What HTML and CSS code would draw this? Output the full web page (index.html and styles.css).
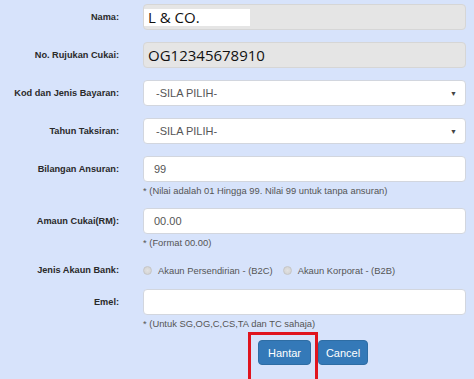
FILE: index.html
```html
<!DOCTYPE html>
<html lang="ms">
<head>
<meta charset="utf-8">
<title>Borang</title>
<link rel="stylesheet" href="styles.css">
</head>
<body>
<form class="form">
  <div class="row">
    <label class="lbl">Nama:</label>
    <div class="field field-disabled field-name"><span class="name-val">L &amp; CO.</span></div>
  </div>
  <div class="row">
    <label class="lbl">No. Rujukan Cukai:</label>
    <div class="field field-disabled field-ref">OG12345678910</div>
  </div>
  <div class="row">
    <label class="lbl">Kod dan Jenis Bayaran:</label>
    <div class="field field-select"><span>-SILA PILIH-</span><span class="arrow">&#9660;</span></div>
  </div>
  <div class="row">
    <label class="lbl">Tahun Taksiran:</label>
    <div class="field field-select"><span>-SILA PILIH-</span><span class="arrow">&#9660;</span></div>
  </div>
  <div class="row row-hint">
    <label class="lbl">Bilangan Ansuran:</label>
    <div class="col">
      <div class="field field-text">99</div>
      <div class="hint">* (Nilai adalah 01 Hingga 99. Nilai 99 untuk tanpa ansuran)</div>
    </div>
  </div>
  <div class="row row-hint">
    <label class="lbl">Amaun Cukai(RM):</label>
    <div class="col">
      <div class="field field-text">00.00</div>
      <div class="hint">* (Format 00.00)</div>
    </div>
  </div>
  <div class="row row-radio">
    <label class="lbl lbl-radio">Jenis Akaun Bank:</label>
    <div class="radios">
      <span class="radio"></span><span class="rlabel">Akaun Persendirian - (B2C)</span>
      <span class="radio radio2"></span><span class="rlabel">Akaun Korporat - (B2B)</span>
    </div>
  </div>
  <div class="row row-hint row-emel">
    <label class="lbl">Emel:</label>
    <div class="col">
      <div class="field field-text"></div>
      <div class="hint">* (Untuk SG,OG,C,CS,TA dan TC sahaja)</div>
    </div>
  </div>
  <div class="row row-buttons">
    <span></span>
    <div class="buttons">
      <span class="highlight"><button type="button" class="btn">Hantar</button></span>
      <button type="button" class="btn btn-cancel">Cancel</button>
    </div>
  </div>
</form>
</body>
</html>
```

FILE: styles.css
```css
html, body {
  margin: 0;
  padding: 0;
  background: #d7e3fb;
  overflow: hidden;
}
body {
  font-family: "Liberation Sans", Arial, sans-serif;
  width: 474px;
  height: 379px;
}
.form {
  padding-top: 4px;
}
.row {
  display: grid;
  grid-template-columns: 119px 323px;
  column-gap: 24px;
  align-items: start;
  margin-bottom: 12px;
}
.row-buttons {
  margin-bottom: 0;
}
.lbl {
  text-align: right;
  font-weight: bold;
  font-size: 9.2px;
  color: #2a2a2a;
  line-height: 26px;
}
.field {
  box-sizing: border-box;
  height: 26px;
  border: 1px solid #d2d6de;
  border-radius: 4px;
  background: #fff;
  display: flex;
  align-items: center;
}
.field-disabled {
  background: #e5e5e5;
  border-color: #d6d6d6;
  font-family: "Open Sans", "Noto Sans", sans-serif;
  font-size: 15px;
  color: #111;
}
.name-val {
  background: #fff;
  width: 102px;
  height: 17px;
  line-height: 17px;
  padding-left: 4px;
}
.field-ref {
  padding-left: 4px;
}
.field-select {
  font-size: 11px;
  color: #555;
  padding-left: 12px;
  padding-right: 8px;
  justify-content: space-between;
}
.arrow {
  font-size: 7px;
  color: #444;
}
.field-text {
  font-size: 11px;
  color: #555;
  padding-left: 10px;
}
.hint {
  font-size: 9.4px;
  color: #555;
  line-height: 11px;
  margin-top: 3px;
}
.row-radio {
  margin-bottom: 9px;
}
.lbl-radio {
  line-height: 20px;
}
.radios {
  display: flex;
  align-items: center;
  height: 20px;
  font-size: 9.4px;
  color: #555;
}
.radio {
  box-sizing: border-box;
  width: 9px;
  height: 9px;
  border-radius: 50%;
  border: 1px solid #c6c6c6;
  background: radial-gradient(circle, #e2e2e2 0, #d0d0d0 100%);
  margin-right: 6px;
}
.radio2 {
  margin-left: 10px;
}
.row-emel {
  margin-bottom: 3px;
}
.buttons {
  display: flex;
  align-items: flex-start;
  padding-left: 105px;
}
.highlight {
  display: block;
  border: 3px solid #e0141e;
  border-bottom: none;
  padding: 5px 4px 14px 7px;
}
.btn {
  display: block;
  height: 25px;
  width: 53px;
  padding: 0;
  border: 1px solid #2e6da4;
  border-radius: 4px;
  background: #3479b8;
  color: #fff;
  font-family: "Liberation Sans", Arial, sans-serif;
  font-size: 11px;
}
.btn-cancel {
  width: 50px;
  margin-top: 8px;
}
```
